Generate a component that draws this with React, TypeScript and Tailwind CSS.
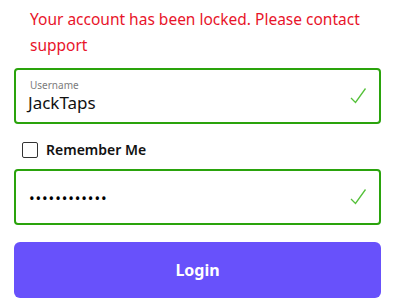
import React from "react";

function Check() {
  return (
    <svg width="18" height="18" viewBox="0 0 18 18" className="shrink-0">
      <path d="M2 11 L6.5 15.5 L16.5 1.5" fill="none" stroke="#55c13a" strokeWidth="1.3" />
    </svg>
  );
}

export default function App() {
  return (
    <div
      className="w-[393px] h-[304px] bg-white pl-[14px] pr-[12px] pt-[6px]"
      style={{ fontFamily: '"Noto Sans", "Open Sans", sans-serif' }}
    >
      <p className="pl-[16px] text-[15.5px] leading-[26px] text-[#e8142a]">
        Your account has been locked. Please contact support
      </p>
      <div className="mt-[10px] h-[56px] border-2 border-[#2aa30c] rounded-[4px] flex items-center pl-[12px] pr-[12px]">
        <div className="flex-1 flex flex-col gap-[1px]">
          <span className="text-[10px] leading-[12px] text-[#7b7b7b] pl-[2px]">Username</span>
          <span className="text-[17px] leading-[22px] text-[#111]">JackTaps</span>
        </div>
        <Check />
      </div>
      <label className="mt-[17px] flex items-center gap-[8px] pl-[8px]">
        <span className="w-[16px] h-[16px] border border-[#333] rounded-[2px] bg-white" />
        <span className="text-[14px] leading-[18px] font-semibold text-[#111]">Remember Me</span>
      </label>
      <div className="mt-[10px] h-[56px] border-2 border-[#2aa30c] rounded-[4px] flex items-center pl-[13px] pr-[12px]">
        <div className="flex-1 text-[15px] leading-[20px] text-black tracking-[0.9px] pt-[2px]">••••••••••••</div>
        <Check />
      </div>
      <button className="mt-[17px] w-full h-[56px] rounded-[6px] bg-[#6851fb] text-white text-[16px] font-bold">
        Login
      </button>
    </div>
  );
}
